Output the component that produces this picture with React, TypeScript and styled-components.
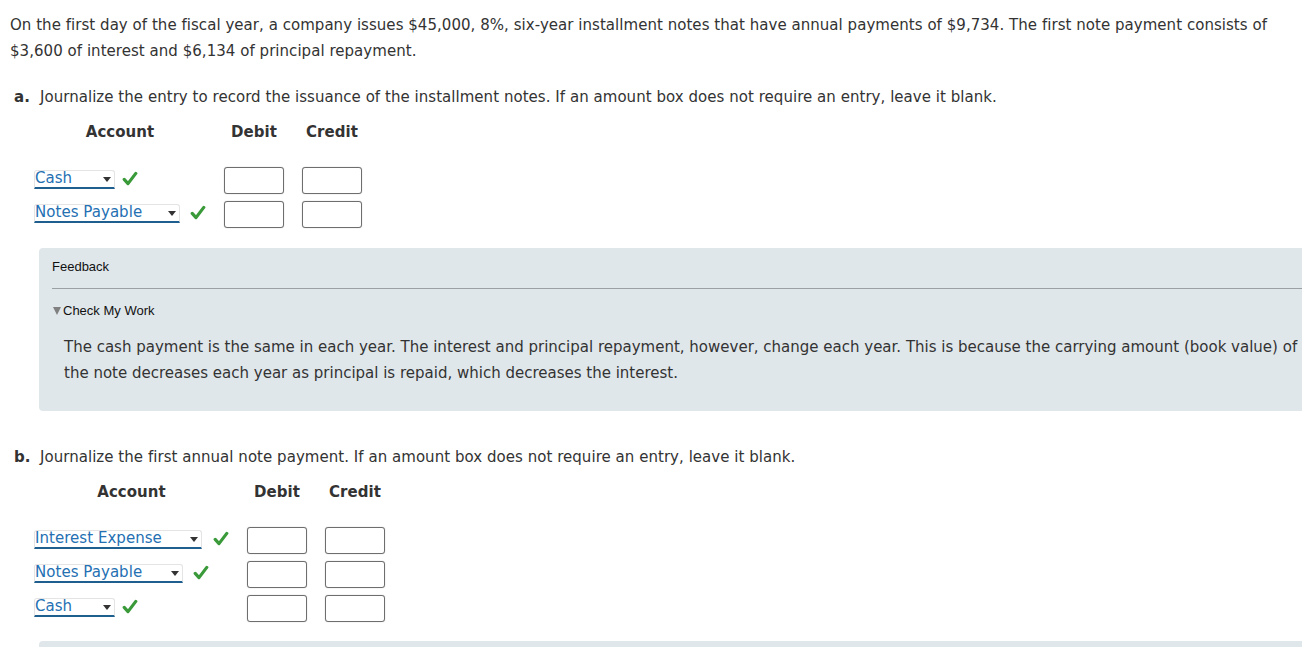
import React from "react";
import styled, { createGlobalStyle } from "styled-components";

const GlobalStyle = createGlobalStyle`
  html, body {
    margin: 0;
    padding: 0;
    overflow: hidden;
    background: #ffffff;
  }
  body {
    font-family: "DejaVu Sans", Verdana, sans-serif;
    color: #333333;
  }
`;

const Page = styled.div`
  width: 1400px;
  height: 647px;
  overflow: hidden;
  padding: 12px 0 0 10px;
  box-sizing: border-box;
  font-size: 15px;
  line-height: 26px;
  letter-spacing: 0.04px;
`;

const Intro = styled.p`
  margin: 0;
`;

const PartHeading = styled.div<{ $top: number }>`
  display: flex;
  margin-top: ${(p) => p.$top}px;
  padding-left: 4px;
`;

const Marker = styled.span`
  width: 26px;
  font-weight: bold;
  flex: none;
`;

const JournalGrid = styled.div<{ $acc: number }>`
  display: grid;
  grid-template-columns: ${(p) => p.$acc}px 60px 60px;
  column-gap: 18px;
  margin: 12px 0 0 24px;
`;

const HeaderCell = styled.div`
  font-weight: bold;
  text-align: center;
  white-space: nowrap;
  line-height: 20px;
  height: 20px;
  margin-bottom: 25px;
  color: #333;
`;

const AccountCell = styled.div`
  display: flex;
  align-items: center;
  height: 27px;
  margin-bottom: 7px;
`;

const Select = styled.div<{ $w: number }>`
  position: relative;
  width: ${(p) => p.$w}px;
  height: 16px;
  margin-top: -3px;
  background: #fff;
  border: 1px solid #e4e4e4;
  border-bottom: 2px solid #1f5f8f;
  border-radius: 3px 3px 0 0;
  white-space: nowrap;
`;

const SelectLabel = styled.span`
  display: block;
  line-height: 16px;
  margin-top: -1px;
  color: #2470b3;
  font-size: 15px;
`;

const Caret = styled.i`
  position: absolute;
  right: 3px;
  top: 6px;
  width: 0;
  height: 0;
  border-left: 4px solid transparent;
  border-right: 4px solid transparent;
  border-top: 5px solid #333;
`;

const Spacer = styled.span<{ $w: number }>`
  flex: none;
  width: ${(p) => p.$w}px;
`;

const Check = styled.svg`
  flex: none;
  width: 16px;
  height: 16px;
  margin-top: -3px;
`;

const AmountInput = styled.div`
  width: 60px;
  height: 27px;
  box-sizing: border-box;
  border: 1px solid #6e6e6e;
  border-radius: 3px;
  box-shadow: 0 0 1px rgba(0, 0, 0, 0.35);
  background: #fff;
  margin-bottom: 7px;
`;

const FeedbackBox = styled.div<{ $top: number }>`
  margin: ${(p) => p.$top}px 0 0 29px;
  width: 1320px;
  background: #e0e7eb;
  border-radius: 4px;
  padding: 10px 0 25px 13px;
`;

const FeedbackTitle = styled.div`
  font-family: "Liberation Sans", Arial, sans-serif;
  font-size: 13px;
  letter-spacing: 0;
  line-height: 18px;
  color: #111;
`;

const Rule = styled.div`
  height: 1px;
  background: #9aa0a4;
  margin-top: 12px;
`;

const Toggle = styled.div`
  display: flex;
  align-items: center;
  margin-top: 13px;
  font-family: "Liberation Sans", Arial, sans-serif;
  font-size: 13px;
  letter-spacing: 0;
  line-height: 18px;
  color: #111;
`;

const ToggleArrow = styled.span`
  width: 0;
  height: 0;
  margin: 0 2px 0 1px;
  border-left: 4px solid transparent;
  border-right: 4px solid transparent;
  border-top: 8px solid #808080;
`;

const Explanation = styled.p`
  margin: 14px 0 0 12px;
  font-size: 15px;
  line-height: 26px;
  letter-spacing: 0;
  color: #333;
`;

const NextFeedback = styled.div`
  margin: 12px 0 0 29px;
  width: 1320px;
  height: 40px;
  background: #e0e7eb;
  border-radius: 4px;
`;

const CheckMark = () => (
  <Check viewBox="0 0 16 16">
    <path
      d="M2.2 8.4 L6 12.6 L13.8 2.4"
      fill="none"
      stroke="#3a9a3a"
      strokeWidth="3.2"
      strokeLinecap="round"
      strokeLinejoin="round"
    />
  </Check>
);

type Row = { account: string; width: number; gap: number };

const Journal = ({ acc, rows }: { acc: number; rows: Row[] }) => (
  <JournalGrid $acc={acc}>
    <HeaderCell>Account</HeaderCell>
    <HeaderCell>Debit</HeaderCell>
    <HeaderCell>Credit</HeaderCell>
    {rows.map((r) => (
      <React.Fragment key={r.account}>
        <AccountCell>
          <Select $w={r.width}>
            <SelectLabel>{r.account}</SelectLabel>
            <Caret />
          </Select>
          <Spacer $w={r.gap} />
          <CheckMark />
        </AccountCell>
        <AmountInput />
        <AmountInput />
      </React.Fragment>
    ))}
  </JournalGrid>
);

const Feedback = ({ top, lines }: { top: number; lines: string[] }) => (
  <FeedbackBox $top={top}>
    <FeedbackTitle>Feedback</FeedbackTitle>
    <Rule />
    <Toggle>
      <ToggleArrow />
      Check My Work
    </Toggle>
    <Explanation>
      {lines.map((l, i) => (
        <React.Fragment key={i}>
          {l}
          {i < lines.length - 1 && <br />}
        </React.Fragment>
      ))}
    </Explanation>
  </FeedbackBox>
);

export default function App() {
  return (
    <>
      <GlobalStyle />
      <Page>
        <Intro>
          On the first day of the fiscal year, a company issues $45,000, 8%, six-year installment notes that have annual payments of $9,734. The first note payment consists of
          <br />
          $3,600 of interest and $6,134 of principal repayment.
        </Intro>

        <PartHeading $top={20}>
          <Marker>a.</Marker>
          <span>Journalize the entry to record the issuance of the installment notes. If an amount box does not require an entry, leave it blank.</span>
        </PartHeading>

        <Journal
          acc={172}
          rows={[
            { account: "Cash", width: 79, gap: 7 },
            { account: "Notes Payable", width: 147, gap: 10 },
          ]}
        />

        <Feedback
          top={13}
          lines={[
            "The cash payment is the same in each year. The interest and principal repayment, however, change each year. This is because the carrying amount (book value) of",
            "the note decreases each year as principal is repaid, which decreases the interest.",
          ]}
        />

        <PartHeading $top={33}>
          <Marker>b.</Marker>
          <span>Journalize the first annual note payment. If an amount box does not require an entry, leave it blank.</span>
        </PartHeading>

        <Journal
          acc={195}
          rows={[
            { account: "Interest Expense", width: 168, gap: 11 },
            { account: "Notes Payable", width: 147, gap: 10 },
            { account: "Cash", width: 79, gap: 7 },
          ]}
        />

        <NextFeedback />
      </Page>
    </>
  );
}
